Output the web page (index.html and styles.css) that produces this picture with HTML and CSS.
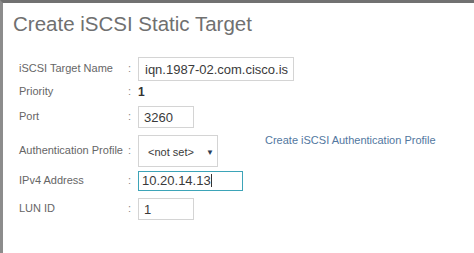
FILE: index.html
```html
<!DOCTYPE html>
<html lang="en">
<head>
    <meta charset="UTF-8">
    <title>Create iSCSI Static Target</title>
    <link rel="stylesheet" href="styles.css">
</head>
<body>
    <div class="dialog">
        <h1 class="title">Create iSCSI Static Target</h1>

        <form class="form">
            <label class="label" for="target-name">iSCSI Target Name</label>
            <span class="colon">:</span>
            <div class="field">
                <input type="text" id="target-name" class="text-input wide" value="iqn.1987-02.com.cisco.iscsi-target">
            </div>

            <span class="label">Priority</span>
            <span class="colon">:</span>
            <div class="field"><span class="value">1</span></div>

            <label class="label" for="port">Port</label>
            <span class="colon">:</span>
            <div class="field">
                <input type="text" id="port" class="text-input short" value="3260">
            </div>

            <label class="label" for="auth-profile">Authentication Profile</label>
            <span class="colon">:</span>
            <div class="field">
                <div class="select" id="auth-profile">
                    <span>&lt;not set&gt;</span>
                    <span class="arrow">&#9660;</span>
                </div>
                <a href="#" class="link">Create iSCSI Authentication Profile</a>
            </div>

            <label class="label" for="ipv4">IPv4 Address</label>
            <span class="colon">:</span>
            <div class="field">
                <div class="text-input ip focused" id="ipv4">10.20.14.13<span class="caret"></span></div>
            </div>

            <label class="label" for="lun">LUN ID</label>
            <span class="colon">:</span>
            <div class="field">
                <input type="text" id="lun" class="text-input short" value="1">
            </div>
        </form>
    </div>
</body>
</html>
```

FILE: styles.css
```css
html, body {
    margin: 0;
    height: 100%;
    background: #fff;
}
body {
    font-family: "Liberation Sans", Arial, sans-serif;
    overflow: hidden;
}
.dialog {
    height: 100%;
    box-sizing: border-box;
    border-top: 3px solid #717171;
    border-left: 3px solid #8c8c8c;
    padding: 0 0 0 10px;
}
.title {
    margin: 0;
    padding-top: 9px;
    font-size: 20.5px;
    font-weight: normal;
    color: #707070;
    line-height: 24px;
    height: 24px;
}
.form {
    display: grid;
    grid-template-columns: 109px 10px 1fr;
    grid-template-rows: 24px 22px 28px 40px 20px 36px;
    margin-top: 21px;
    padding-left: 6px;
    align-items: center;
}
.label {
    font-size: 11px;
    color: #666;
    margin-top: -3px;
    white-space: nowrap;
}
.colon {
    font-size: 11px;
    color: #888;
    margin-top: -2px;
}
.field {
    display: flex;
    align-items: center;
    height: 100%;
}
.value {
    font-size: 12px;
    font-weight: bold;
    color: #333;
}
.text-input {
    box-sizing: border-box;
    border: 1px solid #d4d4d4;
    font-family: "Liberation Sans", Arial, sans-serif;
    font-size: 13px;
    color: #3a3a3a;
    padding: 0 5px;
    margin: 0;
    outline: none;
    background: #fff;
}
.wide {
    width: 156px;
    height: 24px;
    padding-left: 6px;
}
.short {
    width: 56px;
    height: 22px;
}
.ip {
    width: 105px;
    height: 20px;
    line-height: 18px;
    padding-left: 3px;
}
.focused {
    border-color: #3da4b8;
}
.caret {
    display: inline-block;
    width: 1px;
    height: 13px;
    background: #333;
    vertical-align: -2px;
}
.select {
    box-sizing: border-box;
    width: 80px;
    height: 32px;
    border: 1px solid #d4d4d4;
    display: flex;
    align-items: center;
    padding: 2px 0 0 9px;
    font-size: 11px;
    color: #3a3a3a;
}
.arrow {
    font-size: 8px;
    margin-left: 12px;
    color: #2b3d55;
}
.link {
    align-self: flex-start;
    margin: 3px 0 0 47px;
    font-size: 11px;
    color: #5277a0;
    text-decoration: none;
    white-space: nowrap;
}
```
